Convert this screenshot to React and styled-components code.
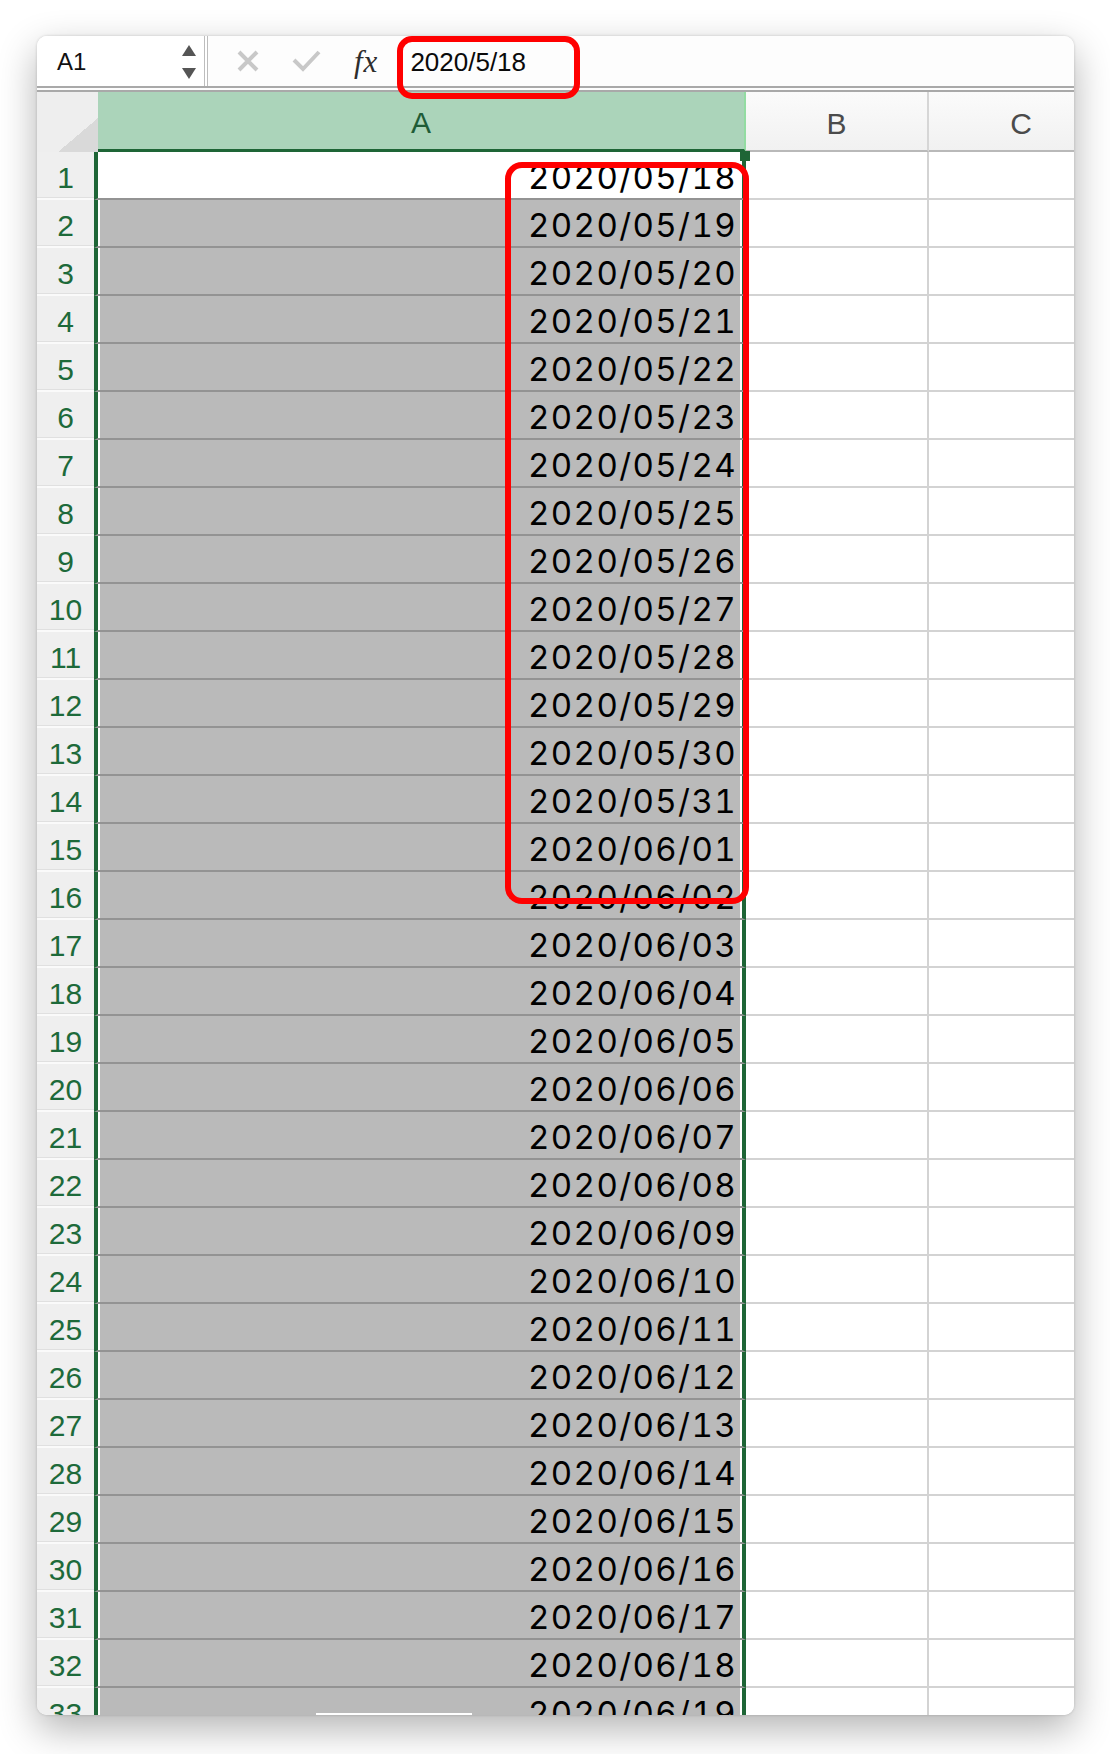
import React from 'react';
import styled, { createGlobalStyle } from 'styled-components';

const GlobalStyle = createGlobalStyle`
  html, body {
    margin: 0;
    padding: 0;
    background: #fff;
  }
  body {
    font-family: "Liberation Sans", Arial, sans-serif;
  }
`;

const GREEN = '#1e6536';

const Page = styled.div`
  width: 1110px;
  height: 1754px;
  box-sizing: border-box;
  padding: 36px 36px 0 37px;
  overflow: hidden;
`;

const Window = styled.div`
  position: relative;
  width: 1037px;
  height: 1679px;
  border-radius: 10px;
  overflow: hidden;
  background: #fff;
  box-shadow: 0 14px 38px rgba(0, 0, 0, 0.3), 0 0 3px rgba(0, 0, 0, 0.18);
  display: flex;
  flex-direction: column;
`;

const FormulaBar = styled.div`
  flex: none;
  height: 56px;
  box-sizing: border-box;
  display: flex;
  align-items: stretch;
  background: #fdfdfd;
  border-bottom: 6px double #a9a9a9;
`;

const NameBox = styled.div`
  width: 171px;
  box-sizing: border-box;
  display: flex;
  align-items: center;
  justify-content: space-between;
  padding: 2px 8px 0 20px;
  background: #fff;
  border-right: 4px double #bdbdbd;
  font-size: 24px;
  color: #111;
`;

const Actions = styled.div`
  display: flex;
  align-items: center;
  gap: 33px;
  padding-left: 29px;
`;

const Fx = styled.span`
  font-family: "Liberation Serif", "Times New Roman", serif;
  font-style: italic;
  font-size: 31px;
  color: #2d2d2d;
  letter-spacing: 1px;
  margin-top: 2px;
`;

const FormulaText = styled.div`
  display: flex;
  align-items: center;
  padding: 2px 0 0 32px;
  font-size: 26px;
  color: #0a0a0a;
`;

const HeaderRow = styled.div`
  flex: none;
  display: flex;
  height: 60px;
`;

const Corner = styled.div`
  flex: none;
  width: 61px;
  background:
    linear-gradient(to bottom right, transparent 50%, #d9d9d9 50%) right bottom / 40px 34px no-repeat,
    #eeeeee;
`;

const ColHead = styled.div`
  flex: none;
  width: ${(p) => p.$w}px;
  box-sizing: border-box;
  display: flex;
  align-items: center;
  justify-content: center;
  padding-top: 5px;
  font-size: 30px;
  ${(p) =>
    p.$selected
      ? `
    background: #abd4ba;
    color: #1f5c37;
    border-bottom: 3px solid ${GREEN};
    border-right: 2px solid #93dca2;
  `
      : `
    background: linear-gradient(#fbfbfb, #f1f1f1);
    color: #4b4b4b;
    border-bottom: 2px solid #b9b9b9;
    border-right: ${p.$last ? 'none' : '2px solid #d6d6d6'};
  `}
`;

const Row = styled.div`
  flex: none;
  display: flex;
  height: 48px;
`;

const RowHead = styled.div`
  flex: none;
  width: 57px;
  box-sizing: border-box;
  display: flex;
  align-items: center;
  justify-content: center;
  padding-top: 6px;
  background: #efefef;
  border-bottom: 2px solid #fafafa;
  box-shadow: inset 0 -1px 0 #e0e0e0;
  color: #1d6a3a;
  font-size: 30px;
`;

const CellA = styled.div`
  flex: none;
  width: 652px;
  box-sizing: border-box;
  display: flex;
  align-items: center;
  justify-content: flex-end;
  padding: 5px 5px 0 0;
  background: ${(p) => (p.$active ? '#fff' : '#bababa')};
  border-left: 4px solid ${GREEN};
  border-right: 4px solid ${GREEN};
  border-bottom: 2px solid #939393;
  box-shadow: inset 2px 0 #fff, inset -2px 0 #fff;
  font-family: Inter, "Noto Sans CJK JP", sans-serif;
  font-variant-numeric: tabular-nums;
  font-size: 33px;
  letter-spacing: 1.4px;
  color: #000;
  line-height: 1;
`;

const Cell = styled.div`
  flex: none;
  width: ${(p) => p.$w}px;
  box-sizing: border-box;
  background: #fff;
  border-bottom: 2px solid #d3d3d3;
  border-right: ${(p) => (p.$last ? 'none' : '2px solid #d3d3d3')};
`;

const RedBox = styled.div`
  position: absolute;
  left: ${(p) => p.$x}px;
  top: ${(p) => p.$y}px;
  width: ${(p) => p.$w}px;
  height: ${(p) => p.$h}px;
  box-sizing: border-box;
  border: 6px solid #ff0000;
  border-radius: ${(p) => p.$r}px;
  pointer-events: none;
`;

const FillHandle = styled.div`
  position: absolute;
  left: 703px;
  top: 115px;
  width: 10px;
  height: 10px;
  background: ${GREEN};
`;

const ScrollThumb = styled.div`
  position: absolute;
  left: 279px;
  bottom: 0;
  width: 156px;
  height: 2px;
  background: #fff;
`;

const Spinner = () => (
  <svg width="14" height="34" viewBox="0 0 14 34">
    <path d="M7 0 L14 11 L0 11 Z" fill="#555" />
    <path d="M0 23 L14 23 L7 34 Z" fill="#555" />
  </svg>
);

const CancelIcon = () => (
  <svg width="22" height="22" viewBox="0 0 22 22">
    <path d="M2 2 L20 20 M20 2 L2 20" stroke="#c8c8c8" strokeWidth="4" />
  </svg>
);

const ConfirmIcon = () => (
  <svg width="29" height="22" viewBox="0 0 29 22">
    <path d="M2 10 L11 19 L27 2" stroke="#c8c8c8" strokeWidth="4" fill="none" />
  </svg>
);

const pad = (n) => String(n).padStart(2, '0');

const dates = Array.from({ length: 33 }, (_, i) => {
  const d = new Date(Date.UTC(2020, 4, 18 + i));
  return `${d.getUTCFullYear()}/${pad(d.getUTCMonth() + 1)}/${pad(d.getUTCDate())}`;
});

export default function App() {
  return (
    <>
      <GlobalStyle />
      <Page>
        <Window>
          <FormulaBar>
            <NameBox>
              <span>A1</span>
              <Spinner />
            </NameBox>
            <Actions>
              <CancelIcon />
              <ConfirmIcon />
              <Fx>fx</Fx>
            </Actions>
            <FormulaText>2020/5/18</FormulaText>
          </FormulaBar>

          <HeaderRow>
            <Corner />
            <ColHead $w={648} $selected>A</ColHead>
            <ColHead $w={183}>B</ColHead>
            <ColHead $w={184} $last>C</ColHead>
          </HeaderRow>

          {dates.map((date, i) => (
            <Row key={date}>
              <RowHead>{i + 1}</RowHead>
              <CellA $active={i === 0}>{date}</CellA>
              <Cell $w={183} />
              <Cell $w={184} $last />
            </Row>
          ))}

          <RedBox $x={360} $y={0} $w={183} $h={63} $r={15} />
          <RedBox $x={468} $y={126} $w={244} $h={742} $r={17} />
          <FillHandle />
          <ScrollThumb />
        </Window>
      </Page>
    </>
  );
}
